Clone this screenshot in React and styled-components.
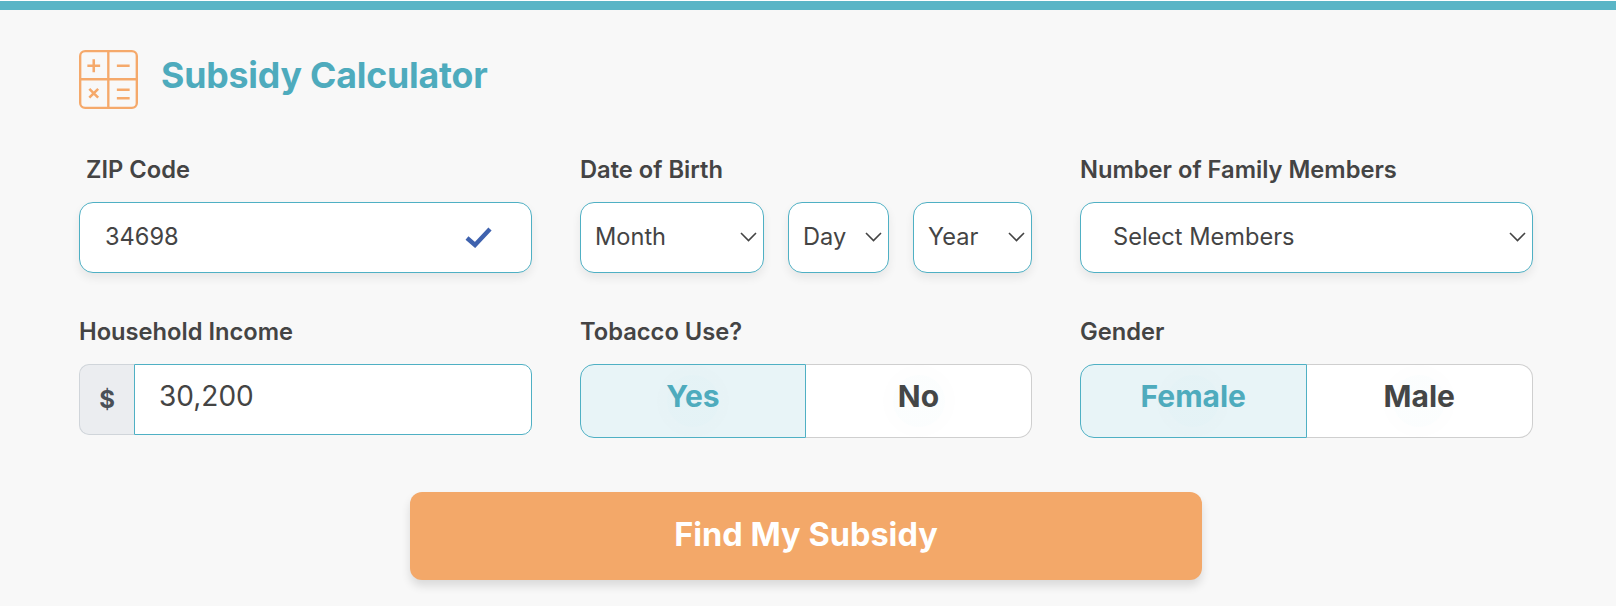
import styled, { createGlobalStyle } from "styled-components";

const GlobalStyle = createGlobalStyle`
  html, body {
    margin: 0;
    background: #fff;
  }
  body {
    font-family: "Inter", "Open Sans", Arial, sans-serif;
    color: #444;
  }
`;

const Page = styled.div`
  width: 1616px;
  box-sizing: border-box;
  margin-top: 1px;
  height: 605px;
  background: #f8f8f8;
  border-top: 9px solid #5ab5c6;
  padding: 40px 83px 0 79px;
  overflow: hidden;
`;

const Header = styled.div`
  display: flex;
  align-items: center;
  gap: 23px;
  height: 59px;
  margin-bottom: 46px;
`;

const Title = styled.h1`
  margin: 0 0 10px;
  font-size: 35.7px;
  font-weight: 700;
  color: #4eabbd;
  letter-spacing: -0.2px;
`;

const Form = styled.div`
  display: grid;
  grid-template-columns: 453px 452px 453px;
  column-gap: 48px;
  row-gap: 44px;
`;

const Field = styled.div`
  display: flex;
  flex-direction: column;
`;

const Label = styled.label`
  display: block;
  height: 30px;
  line-height: 30px;
  margin-bottom: 17px;
  padding-left: ${(p) => p.$indent || 0}px;
  font-size: 23.7px;
  font-weight: 600;
  color: #444;
  white-space: nowrap;
`;

const Shell = styled.div`
  position: relative;
  display: flex;
  align-items: center;
  flex: ${(p) => (p.$width ? "none" : 1)};
  width: ${(p) => (p.$width ? `${p.$width}px` : "auto")};
  height: 71px;
  box-sizing: border-box;
  background: #fff;
  border: 1px solid #4fb0c4;
  border-radius: 14px;
  box-shadow: 0 5px 10px rgba(0, 0, 0, 0.07);
`;

const TextInput = styled.input`
  width: 100%;
  border: 0;
  outline: 0;
  background: transparent;
  padding: 0 0 0 ${(p) => p.$pad}px;
  font-family: inherit;
  font-size: ${(p) => p.$size || 23.6}px;
  color: #444;
  position: relative;
  top: ${(p) => p.$lift || -1}px;
`;

const CheckMark = styled.svg`
  position: absolute;
  right: 39px;
  top: 24px;
`;

const SelectRow = styled.div`
  display: flex;
  gap: 24px;
`;

const Select = styled.select`
  appearance: none;
  width: 100%;
  height: 100%;
  border: 0;
  outline: 0;
  background: transparent;
  padding: 0 0 3px ${(p) => p.$pad}px;
  font-family: inherit;
  font-size: 23.6px;
  color: #444;
`;

const Chevron = styled.svg`
  position: absolute;
  right: 6px;
  top: 29px;
  pointer-events: none;
`;

const InputGroup = styled.div`
  display: flex;
  height: 71px;
  box-sizing: border-box;
`;

const Addon = styled.div`
  display: flex;
  align-items: center;
  justify-content: center;
  width: 55px;
  box-sizing: border-box;
  background: #ebedf0;
  border: 1px solid #d0d5da;
  border-right: 0;
  border-radius: 10px 0 0 10px;
  font-size: 24px;
  font-weight: 700;
  color: #495057;
`;

const GroupBody = styled.div`
  flex: 1;
  display: flex;
  align-items: center;
  background: #fff;
  border: 1px solid #4fb0c4;
  border-radius: 0 10px 10px 0;
`;

const Toggle = styled.div`
  display: grid;
  grid-template-columns: 1fr 1fr;
  height: 74px;
`;

const ToggleOption = styled.button`
  position: relative;
  padding: 0 0 11px;
  font-family: inherit;
  font-size: 30px;
  font-weight: 700;
  overflow: hidden;
  color: ${(p) => (p.$active ? "#4eabbd" : "#444")};
  background: ${(p) => (p.$active ? "#e8f4f7" : "#fff")};
  border: 1px solid ${(p) => (p.$active ? "#4fb0c4" : "#cfcfcf")};
  border-left: ${(p) => (p.$active ? "1px solid #4fb0c4" : "0")};
  border-radius: ${(p) => (p.$active ? "14px 0 0 14px" : "0 14px 14px 0")};

  &::before {
    content: "";
    position: absolute;
    left: 50%;
    top: 50%;
    width: 72px;
    height: 72px;
    margin: -36px 0 0 -36px;
    border-radius: 50%;
    background: radial-gradient(circle, rgba(90, 181, 198, 0.025) 50%, rgba(0, 0, 0, 0.004) 52%);
    pointer-events: none;
  }
`;

const Actions = styled.div`
  display: flex;
  justify-content: center;
  padding-top: 54px;
`;

const SubmitButton = styled.button`
  width: 792px;
  height: 88px;
  padding: 0 0 4px;
  border: 0;
  border-radius: 12px;
  background: #f3a869;
  color: #fff;
  font-family: inherit;
  font-size: 32.5px;
  font-weight: 700;
  box-shadow: 0 6px 10px rgba(0, 0, 0, 0.12);
`;

const CalculatorIcon = () => (
  <svg width="59" height="59" viewBox="0 0 60 60" fill="none" stroke="#f5a96b" strokeWidth="2.4">
    <rect x="1.2" y="1.2" width="57.6" height="57.6" rx="5" />
    <path d="M29.8 1v58M1 29.8h58" />
    <path d="M15 9.5v13M8.5 16h13M38.5 16h13" strokeWidth="2.6" />
    <path d="M10.5 39.5l9 9M19.5 39.5l-9 9" strokeWidth="2.6" />
    <path d="M38.5 40.5h13M38.5 49h13" strokeWidth="2.6" />
  </svg>
);

const ChevronIcon = () => (
  <Chevron width="17" height="10" viewBox="0 0 17 10" fill="none" stroke="#444" strokeWidth="1.6">
    <path d="M1 1l7.5 7.5L16 1" />
  </Chevron>
);

const DropDown = ({ width, pad, children }) => (
  <Shell $width={width}>
    <Select $pad={pad}>
      <option>{children}</option>
    </Select>
    <ChevronIcon />
  </Shell>
);

const App = () => (
  <>
    <GlobalStyle />
    <Page>
      <Header>
        <CalculatorIcon />
        <Title>Subsidy Calculator</Title>
      </Header>
      <Form>
        <Field>
          <Label $indent={7}>ZIP Code</Label>
          <Shell>
            <TextInput defaultValue="34698" $pad={25} />
            <CheckMark width="27" height="21" viewBox="0 0 27 21" fill="none" stroke="#3f62ae" strokeWidth="4.4">
              <path d="M2 11l8 7L25 2" />
            </CheckMark>
          </Shell>
        </Field>
        <Field>
          <Label>Date of Birth</Label>
          <SelectRow>
            <DropDown width={184} pad={14}>Month</DropDown>
            <DropDown width={101} pad={14}>Day</DropDown>
            <DropDown width={119} pad={14}>Year</DropDown>
          </SelectRow>
        </Field>
        <Field>
          <Label>Number of Family Members</Label>
          <DropDown pad={32}>Select Members</DropDown>
        </Field>
        <Field>
          <Label>Household Income</Label>
          <InputGroup>
            <Addon>$</Addon>
            <GroupBody>
              <TextInput defaultValue="30,200" $pad={24} $size={28} $lift={-4} />
            </GroupBody>
          </InputGroup>
        </Field>
        <Field>
          <Label>Tobacco Use?</Label>
          <Toggle>
            <ToggleOption $active>Yes</ToggleOption>
            <ToggleOption>No</ToggleOption>
          </Toggle>
        </Field>
        <Field>
          <Label>Gender</Label>
          <Toggle>
            <ToggleOption $active>Female</ToggleOption>
            <ToggleOption>Male</ToggleOption>
          </Toggle>
        </Field>
      </Form>
      <Actions>
        <SubmitButton>Find My Subsidy</SubmitButton>
      </Actions>
    </Page>
  </>
);

export default App;
